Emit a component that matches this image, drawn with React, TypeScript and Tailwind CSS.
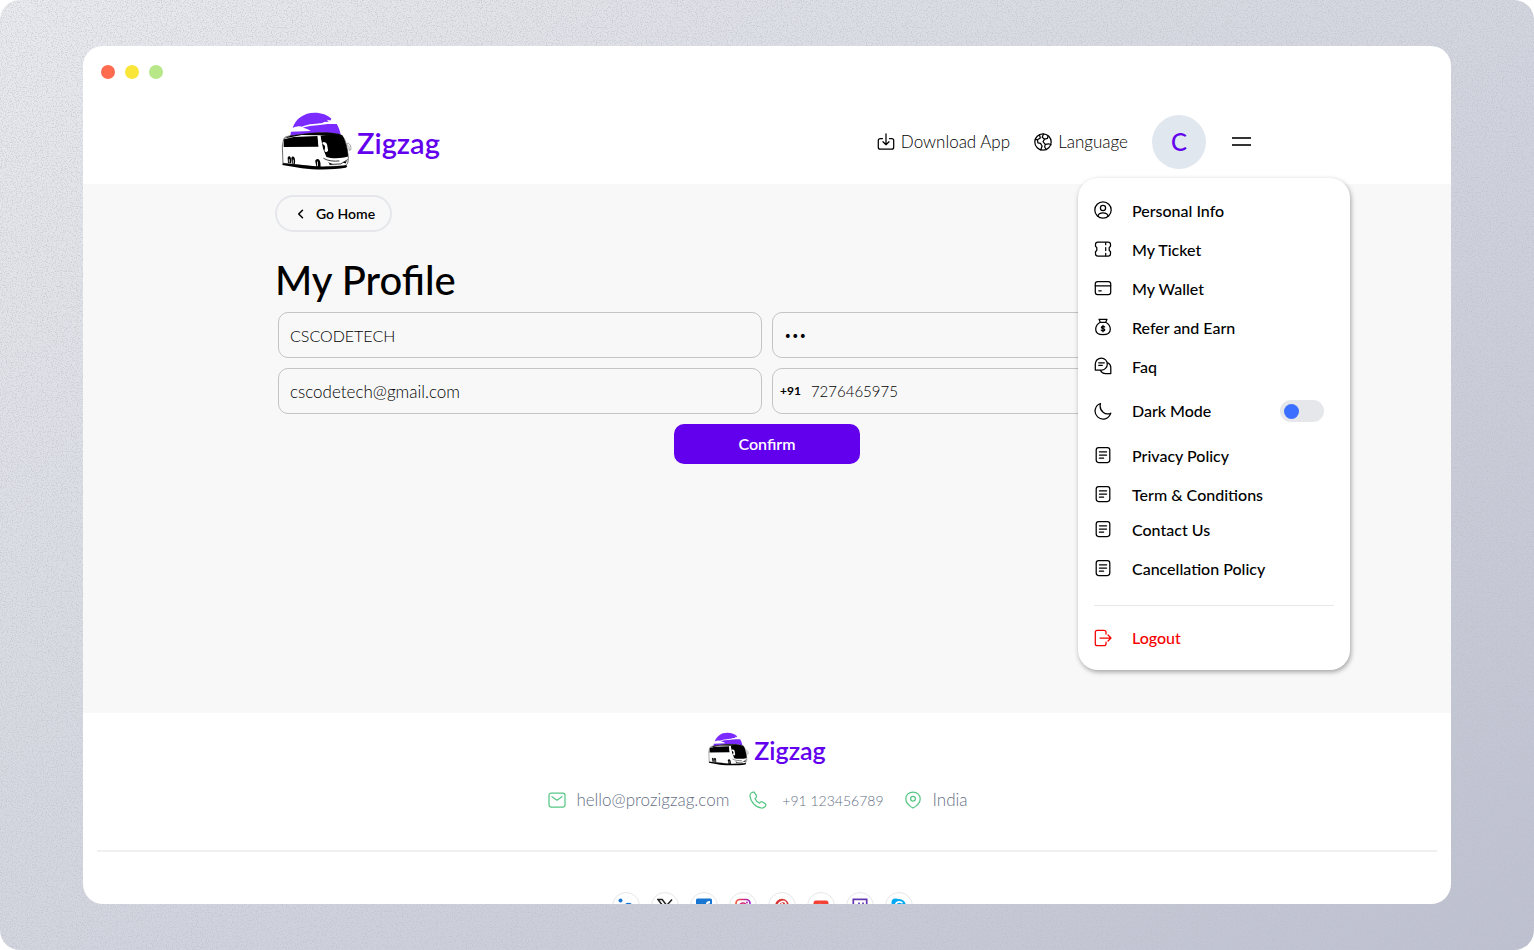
import { useState } from "react";
import type { ReactNode } from "react";

const line = { fill: "none", stroke: "currentColor", strokeWidth: 1.5, strokeLinecap: "round", strokeLinejoin: "round" } as const;

function Icon({ children, className = "size-[18px]" }: { children: ReactNode; className?: string }) {
  return (
    <svg viewBox="0 0 18 18" className={`shrink-0 ${className}`} aria-hidden="true" {...line} strokeWidth={1.25}>
      {children}
    </svg>
  );
}

const PolicyIcon = () => (
  <Icon className="mb-px size-[18px]">
    <rect x="2.2" y="1.7" width="13.6" height="14.8" rx="2.4" />
    <path d="M5.4 5.8h7.2M5.4 9h7.2M5.4 12.2h4.2" />
  </Icon>
);

function BusLogo({ className }: { className: string }) {
  return (
    <svg viewBox="8 7 214 178" className={className} aria-hidden="true">
      <g fill="#7b2bff">
        <path d="M43 57C52 29 77 11 109 11C130 11 149 18 160 29L157 34L146 32L152 38L138 39C132 44 118 43 106 45C90 46 82 49 70 53C60 50 52 53 43 57Z" />
        <path d="M74 56C84 52 104 50 126 48C140 45 157 45 176 45C182 54 186 67 188 78L130 71L36 82L38 68L98 66C92 61 82 58 74 56Z" />
      </g>
      <path d="M16 91C17 86 22 83 32 81L96 73C126 70 171 71 189 78C198 84 202 95 206 111L211 143C211 163 208 169 196 172L136 173L120 175L14 163L12 112Z" fill="#fff" stroke="#222" strokeWidth="2" />
      <path d="M16 89L36 80L90 73C140 68 175 71 193 79L196 84L124 79L70 78L22 88Z" fill="#050505" />
      <path d="M17 91L46 84L118 81L121 113L16 114Z" fill="#000" />
      <path d="M127 80C160 76 190 79 197 86C205 105 210 128 210 143C190 149 160 149 145 144L134 118Z" fill="#000" />
      <path d="M133 101C137 97 145 100 147 107L150 125C148 130 142 131 139 127L141 113C139 108 136 106 133 106Z" fill="#fff" />
      <path d="M119 82C120 112 124 126 133 138L141 139C135 124 130 105 127 82Z" fill="#fff" />
      <path d="M28 146C33 136 41 144 38 163L29 162ZM39 147C45 136 53 146 50 165L41 164ZM111 156C115 145 130 148 127 175L115 174Z" fill="#000" />
      <path d="M33 151V161M45 152V163M118 158V172" stroke="#fff" strokeWidth="2.500" />
      <path d="M13 163C50 166 90 171 136 174L198 170C208 167 211 172 203 177C165 183 110 183 71 178L12 168Z" fill="#000" />
      <path d="M136 148C148 156 168 158 184 156M154 167L188 165L209 152" fill="none" stroke="#111" strokeWidth="2.500" />
      <path d="M150 160L164 165L156 167ZM194 161L206 156L203 164Z" fill="#000" />
      <path d="M206 104C214 99 221 112 218 123L213 124C215 113 211 108 206 108Z" fill="#fff" stroke="#777" strokeWidth="2" />
    </svg>
  );
}

const menuItems = [
  {
    label: "Personal Info",
    icon: (
      <Icon className="mb-px size-[18px]">
        <circle cx="9" cy="9" r="8.2" />
        <circle cx="9" cy="7" r="2.6" />
        <path d="M3.900 15.200C4.300 12.900 6 11.800 9 11.800s4.700 1.100 5.100 3.400" />
      </Icon>
    ),
  },
  {
    label: "My Ticket",
    icon: (
      <Icon className="mb-px size-[18px]">
        <path d="M3.800 2h10.400c1.400 0 2.300.9 2.300 2.300v1.900l-1.300 1.400v2.800l1.300 1.400v1.900c0 1.400-.9 2.300-2.300 2.300H3.800c-1.400 0-2.300-.9-2.300-2.300v-1.900l1.300-1.400V7.600L1.500 6.200V4.300C1.500 2.900 2.400 2 3.800 2Z" />
        <path d="M11.700 2.500v2.200M11.700 7.500v3M11.700 13.300v2.200" />
      </Icon>
    ),
  },
  {
    label: "My Wallet",
    icon: (
      <Icon className="mb-px size-[18px]">
        <rect x="1.300" y="2.500" width="15.400" height="13" rx="2.300" />
        <path d="M1.300 6.800h15.400M4.800 11.800h2.400" />
      </Icon>
    ),
  },
  {
    label: "Refer and Earn",
    icon: (
      <Icon className="mb-px size-[18px]">
        <path d="M5 1.300h8l-1.300 3H6.300ZM6.300 4.300C3.500 5.900 1.700 8.400 1.700 11.200c0 3.600 2.500 5.500 7.300 5.500s7.300-1.900 7.300-5.500c0-2.800-1.800-5.300-4.600-6.900" />
        <path d="M10.700 9c-.5-1-3.300-1-3.300.5s3.400.7 3.400 2.200-2.900 1.500-3.500.4M9 7.400v6.400" />
      </Icon>
    ),
  },
  {
    label: "Faq",
    icon: (
      <Icon className="mb-px size-[18px]">
        <path d="M1.300 13.100V7a6 6 0 1 1 6 6.100ZM4.700 5.800h5.600M4.700 8.300h3.600" />
        <path d="M13.800 5.700c1.900.9 3 2.700 3 4.900v6h-5.400c-2.300 0-4-1.100-4.900-3" />
      </Icon>
    ),
  },
];

const policyItems = ["Privacy Policy", "Term & Conditions", "Contact Us", "Cancellation Policy"];

const socials = [
  {
    name: "LinkedIn",
    icon: (
      <>
        <circle cx="2.500" cy="2.500" r="2" fill="#1976d2" />
        <path d="M2.500 6v10M7 6v10M7 10c0-5 7-5 7 0v6" fill="none" stroke="#1976d2" strokeWidth="3" />
      </>
    ),
  },
  {
    name: "X",
    icon: <path d="M1 1.500h4.200l10.300 13.500h-4.200ZM15 1.500 9.500 7.700M7 10 2 15.500" fill="none" stroke="#222" strokeWidth="1.500" />,
  },
  {
    name: "Facebook",
    icon: (
      <>
        <rect x="0" y="0.500" width="16" height="15.500" rx="1.500" fill="#1976d2" />
        <path d="M10 16V9H8V6.500h2C10 4 11 3 14 3v2.500c-1.500 0-1.800.2-1.800 1H14L13.600 9h-1.400v7Z" fill="#fff" />
      </>
    ),
  },
  {
    name: "Instagram",
    icon: (
      <>
        <defs>
          <linearGradient id="insta" x1="0" x2="1">
            <stop offset="0" stopColor="#f05a3c" />
            <stop offset="0.500" stopColor="#d62976" />
            <stop offset="1" stopColor="#9128c4" />
          </linearGradient>
        </defs>
        <rect x="1" y="1.500" width="14" height="14" rx="4" fill="none" stroke="url(#insta)" strokeWidth="1.700" />
        <circle cx="8" cy="8.500" r="3.500" fill="none" stroke="#d62976" strokeWidth="1.700" />
        <circle cx="12" cy="4.500" r="1" fill="#b32aa5" />
      </>
    ),
  },
  {
    name: "Pinterest",
    icon: (
      <>
        <circle cx="8" cy="7.500" r="6.800" fill="#d93636" />
        <path d="M5 9C2.500 4 11.500 1 12 6c.2 4-4 5.500-4.500 3M8.300 5 6 15" fill="none" stroke="#fff" strokeWidth="1.700" />
      </>
    ),
  },
  {
    name: "YouTube",
    icon: (
      <>
        <rect x="0.500" y="2.500" width="15" height="11" rx="2.500" fill="#f44336" />
        <path d="m6.500 5.500 4.500 2.500-4.500 2.500Z" fill="#fff" />
      </>
    ),
  },
  {
    name: "Twitch",
    icon: <path d="M1.300 1.300h13.400v9l-3 3H8l-3 2.500v-2.500H1.300ZM7 4.500v4M11 4.500v4" fill="none" stroke="#6537b1" strokeWidth="1.700" />,
  },
  {
    name: "Skype",
    icon: (
      <>
        <circle cx="8" cy="8" r="7" fill="#03a9f4" />
        <circle cx="4.500" cy="4.500" r="4" fill="#03a9f4" />
        <path d="M11.500 5.300C9.500 3 4.500 4 5 6.300s6.200 1 6 3.700c-.5 2-5 2-6.500-.3" fill="none" stroke="#fff" strokeWidth="1.700" />
      </>
    ),
  },
];

const fieldClass = "h-[46px] w-full min-w-0 rounded-[10px] border border-[#c4c4c4] bg-transparent px-[11px] font-light text-black outline-none";
const rowClass = "flex h-[39px] w-full items-center gap-5 text-left text-[16px] font-medium text-black";

function AccountMenu() {
  const [dark, setDark] = useState(false);

  return (
    <nav
      aria-label="Account"
      className="absolute top-[79px] right-[101px] z-10 w-[272px] rounded-[20px] bg-white px-4 pt-[13px] pb-[13px] shadow-[1px_2px_5px_rgba(0,0,0,0.35)]"
    >
      {menuItems.map((item) => (
        <button key={item.label} type="button" className={rowClass}>
          {item.icon}
          {item.label}
        </button>
      ))}
      <div className="flex h-[50px] items-center gap-5 text-[16px] font-medium text-black">
        <Icon className="mb-px size-[18px]">
          <path d="M6.500 1.500a8 8 0 1 0 10.300 9.700c-1.500 1-4.900 1.300-7.400-.7-2.900-2.400-3.900-5.600-2.900-9Z" />
        </Icon>
        <label htmlFor="dark-mode">Dark Mode</label>
        <input
          id="dark-mode"
          type="checkbox"
          checked={dark}
          onChange={(e) => setDark(e.target.checked)}
          className="mr-[10px] ml-auto flex h-[22px] w-11 appearance-none items-center rounded-full bg-[#e5e7eb] px-1 before:size-[15px] before:rounded-full before:bg-[#3b6fff] checked:justify-end"
        />
      </div>
      {policyItems.map((label) => (
        <button key={label} type="button" className={`${rowClass} ${label === "Contact Us" ? "-mt-1" : ""}`}>
          <PolicyIcon />
          {label}
        </button>
      ))}
      <hr className="mt-[17px] mb-[13px] border-[#e5e7eb]" />
      <button type="button" className="flex h-[38px] w-full items-center gap-5 text-left text-[16px] font-medium text-[#f40000]">
        <Icon className="mb-px size-[18px]">
          <path d="M12 5V3.300c0-1.200-.8-2-2-2H3.300c-1.200 0-2 .8-2 2v11.400c0 1.200.8 2 2 2H10c1.200 0 2-.8 2-2V13M6 9h11M14 6l3 3-3 3" />
        </Icon>
        Logout
      </button>
    </nav>
  );
}

function Header() {
  return (
    <header className="relative px-6">
      <div className="mx-auto flex h-[85px] max-w-[984px] items-center">
        <a href="#home" className="ml-[6px] flex items-center gap-[5px]">
          <BusLogo className="mb-[2px] h-[60px] w-[71px]" />
          <span className="pt-[2px] text-[29px] leading-8 font-semibold text-[#6200ee]">Zigzag</span>
        </a>
        <div className="mr-2 ml-auto flex items-center text-[17px] font-light text-black">
          <button type="button" className="flex items-center gap-[6px]">
            <Icon>
              <path d="M5.500 5.500H3.300c-1.300 0-2 .8-2 2v6.700c0 1.300.8 2 2 2h11.400c1.300 0 2-.8 2-2V7.500c0-1.300-.8-2-2-2h-2.200M9 .8v10.600M6 8.700l3 3 3-3" />
            </Icon>
            Download App
          </button>
          <button type="button" className="ml-6 flex items-center gap-[6px]">
            <Icon>
              <circle cx="9" cy="9" r="8.200" />
              <path d="M5.500 1.900 6.300 5 3.500 6.800 1.500 6.300M3.500 6.800l.4 3 2.600.6 1.600 2.600-1.400 4M9.500 1l-1.300 3.300 2.300 1.800L9 8.700l2.200 2.700 3.500-.6 2.300 1M10.500 6.100l3-.8.5-2.300M11.200 11.400l-.5 2.600 1.500 2.500" />
            </Icon>
            Language
          </button>
          <span className="ml-6 grid size-[54px] place-items-center rounded-full bg-[#e1e7ef] text-[24px] font-medium text-[#6200ee]">C</span>
          <button type="button" aria-label="Open menu" className="ml-[26px] flex w-[19px] flex-col gap-[5px]">
            <span className="h-[2px] w-full bg-[#333]" />
            <span className="h-[2px] w-full bg-[#333]" />
          </button>
        </div>
      </div>
      <AccountMenu />
    </header>
  );
}

function Profile() {
  return (
    <main className="min-h-0 flex-1 bg-[#f8f8f8] px-6 pt-[11px]">
      <div className="mx-auto max-w-[984px]">
        <button type="button" className="flex h-[37px] w-[117px] items-center rounded-full border-2 border-[#e5e7eb] pl-[19px] text-[14px] font-semibold text-black">
          <svg viewBox="0 0 10 10" className="mr-[10px] size-[10px]" aria-hidden="true" {...line}>
            <path d="M6.500 1.200 2.700 5l3.800 3.800" />
          </svg>
          Go Home
        </button>
        <h1 className="mt-6 mb-2 text-[40px] leading-[48px] font-medium text-black">My Profile</h1>
        <form className="px-[3px]" onSubmit={(e) => e.preventDefault()}>
          <div className="grid grid-cols-2 gap-[10px]">
            <input className={`${fieldClass} text-[16px]`} aria-label="Name" defaultValue="CSCODETECH" />
            <input className={`${fieldClass} text-[13px]`} aria-label="Password" type="password" defaultValue="123" />
            <input className={`${fieldClass} text-[17px]`} aria-label="Email" type="email" defaultValue="cscodetech@gmail.com" />
            <label className="flex h-[46px] items-center rounded-[10px] border border-[#c4c4c4] pl-[7px]">
              <span className="text-[12px] font-bold text-black">+91</span>
              <input className="ml-[10px] w-full min-w-0 bg-transparent text-[15px] font-light text-black outline-none" aria-label="Phone number" type="tel" defaultValue="7276465975" />
            </label>
          </div>
          <button type="submit" className="mx-auto mt-[10px] block h-10 w-[186px] rounded-[10px] bg-[#6200ee] text-[16px] font-semibold text-white">
            Confirm
          </button>
        </form>
      </div>
    </main>
  );
}

function Footer() {
  return (
    <footer className="h-[191px] shrink-0 overflow-hidden px-[14px] pt-[19px]">
      <a href="#home" className="mx-auto flex w-fit items-center gap-[5px]">
        <BusLogo className="mb-[2px] h-[34px] w-[41px]" />
        <span className="text-[25px] leading-8 font-semibold text-[#6200ee]">Zigzag</span>
      </a>
      <address className="mt-5 flex h-6 items-center justify-center pr-[18px] text-[17px] font-light text-[#667085] not-italic">
        <a href="mailto:hello@prozigzag.com" className="flex items-center gap-[10px]">
          <Icon className="size-[18px] text-[#57c785]">
            <rect x="1" y="2" width="16" height="14" rx="2.200" />
            <path d="m4 5.700 5 3.500 5-3.500" />
          </Icon>
          hello@prozigzag.com
        </a>
        <a href="tel:+91123456789" className="ml-5 flex items-center gap-[15px] text-[14px]">
          <Icon className="size-[18px] text-[#57c785]">
            <path d="M5.200 1.200C3.300.5.800 2.500 1 5c.5 6 6 11.600 11.700 12 2.500.2 4.700-2.200 4-4l-3.600-2.200c-1-.5-1.700.1-2.500 1.400C8.300 11.200 6.800 9.700 6 7.500c1.400-.9 1.900-1.600 1.500-2.600Z" />
          </Icon>
          +91 123456789
        </a>
        <span className="ml-5 flex items-center gap-[11px]">
          <Icon className="size-[18px] text-[#57c785]">
            <path d="M9 17C5 14.800 1.800 11.700 1.800 7.700 1.800 3.800 5 1 9 1s7.200 2.800 7.200 6.700c0 4-3.200 7.100-7.200 9.300Z" />
            <circle cx="9" cy="7.800" r="2.400" />
          </Icon>
          India
        </span>
      </address>
      <hr className="mt-[38px] border-t-2 border-[#f0f0f0]" />
      <div className="mt-10 flex justify-center gap-[11px] pr-[10px]">
        {socials.map((social) => (
          <a key={social.name} href={`#${social.name}`} aria-label={social.name} className="grid size-7 place-items-center rounded-full border border-[#e5e7eb]">
            <svg viewBox="0 0 16 16" className="size-4" aria-hidden="true">
              {social.icon}
            </svg>
          </a>
        ))}
      </div>
    </footer>
  );
}

export default function App() {
  return (
    <div className="bg-white font-['Lato','Open_Sans',sans-serif]">
      <div className="relative isolate h-screen overflow-hidden rounded-[20px] bg-linear-to-br from-[#e9eaee] to-[#bdc1d0] px-[83px] py-[46px]">
        {/* paper grain over the backdrop */}
        <svg className="absolute inset-0 -z-10 size-full opacity-50" aria-hidden="true">
          <filter id="grain" x="0" y="0" width="100%" height="100%">
            <feTurbulence type="fractalNoise" baseFrequency="0.8" numOctaves="2" />
            <feColorMatrix values="0 0 0 0 0.5  0 0 0 0 0.5  0 0 0 0 0.55  4 0 0 0 -1.9" />
          </filter>
          <rect width="100%" height="100%" filter="url(#grain)" />
        </svg>
        <div className="flex h-full flex-col overflow-hidden rounded-[20px] bg-white">
          <div className="flex h-[53px] shrink-0 gap-[10px] pt-[19px] pl-[18px]">
            <span className="size-[14px] rounded-full bg-[#ff6b4f]" />
            <span className="size-[14px] rounded-full bg-[#fae639]" />
            <span className="size-[14px] rounded-full bg-[#b7e788]" />
          </div>
          <Header />
          <Profile />
          <Footer />
        </div>
      </div>
    </div>
  );
}
